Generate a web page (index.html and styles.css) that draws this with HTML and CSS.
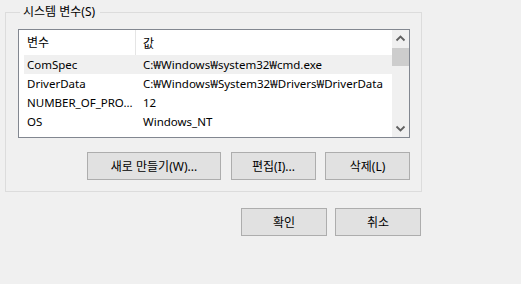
FILE: index.html
```html
<!DOCTYPE html>
<html lang="ko">
<head>
    <meta charset="UTF-8">
    <title>시스템 변수</title>
    <link rel="stylesheet" href="styles.css">
</head>
<body>

    <div class="group">
        <div class="group-title">시스템 변수(S)</div>

        <!-- Variable list -->
        <div class="list">
            <div class="list-body">
                <div class="list-header">
                    <div class="head-cell name">변수</div>
                    <div class="head-cell value">값</div>
                </div>
                <div class="row selected">
                    <div class="cell name">ComSpec</div>
                    <div class="cell value">C:₩Windows₩system32₩cmd.exe</div>
                </div>
                <div class="row">
                    <div class="cell name">DriverData</div>
                    <div class="cell value">C:₩Windows₩System32₩Drivers₩DriverData</div>
                </div>
                <div class="row">
                    <div class="cell name">NUMBER_OF_PRO...</div>
                    <div class="cell value">12</div>
                </div>
                <div class="row">
                    <div class="cell name">OS</div>
                    <div class="cell value">Windows_NT</div>
                </div>
            </div>
            <div class="scrollbar">
                <svg class="arrow" width="17" height="17" viewBox="0 0 17 17">
                    <path d="M4.5 10.5 L8.5 6.5 L12.5 10.5" fill="none" stroke="#606060" stroke-width="1.8"/>
                </svg>
                <div class="track">
                    <div class="thumb"></div>
                </div>
                <svg class="arrow" width="17" height="17" viewBox="0 0 17 17">
                    <path d="M4.5 6.5 L8.5 10.5 L12.5 6.5" fill="none" stroke="#606060" stroke-width="1.8"/>
                </svg>
            </div>
        </div>

        <div class="buttons">
            <button class="btn wide">새로 만들기(W)...</button>
            <button class="btn">편집(I)...</button>
            <button class="btn">삭제(L)</button>
        </div>
    </div>

    <div class="dialog-buttons">
        <button class="btn">확인</button>
        <button class="btn">취소</button>
    </div>

</body>
</html>
```

FILE: styles.css
```css
* {
    margin: 0;
    padding: 0;
    box-sizing: border-box;
}

body {
    font-family: 'Segoe UI', 'Noto Sans', 'Noto Sans CJK KR', sans-serif;
    font-size: 11.5px;
    color: #000;
    background-color: #f0f0f0;
    width: 521px;
    height: 284px;
    overflow: hidden;
}

.group {
    margin: 12px 0 0 5px;
    width: 417px;
    border: 1px solid #dcdcdc;
    padding: 0 11px 11px 12px;
}

.group-title {
    width: fit-content;
    margin: -9px 0 0 2px;
    padding: 0 5px 0 3px;
    font-size: 12px;
    line-height: 16px;
    background-color: #f0f0f0;
}

.list {
    display: flex;
    margin-top: 9px;
    width: 392px;
    height: 109px;
    border: 1px solid #828790;
    background-color: white;
}

.list-body {
    flex: 1;
    overflow: hidden;
}

.list-header {
    display: flex;
    height: 25px;
    align-items: center;
    font-size: 12px;
}

.head-cell.name {
    width: 117px;
    padding-left: 8px;
    height: 100%;
    line-height: 25px;
    border-right: 1px solid #e5e5e5;
}

.head-cell.value {
    padding-left: 7px;
}

.row {
    display: flex;
    height: 19px;
    line-height: 19px;
    margin-left: 5px;
    white-space: nowrap;
}

.row.selected {
    background-color: #f0f0f0;
}

.cell {
    padding-left: 3px;
}

.cell.name {
    width: 116px;
}

.scrollbar {
    width: 17px;
    display: flex;
    flex-direction: column;
    background-color: #f0f0f0;
}

.arrow {
    display: block;
}

.track {
    flex: 1;
    padding-top: 1px;
}

.thumb {
    height: 18px;
    background-color: #cdcdcd;
}

.buttons {
    display: flex;
    justify-content: flex-end;
    gap: 9px;
    margin-top: 14px;
}

.btn {
    font-family: inherit;
    font-size: 12px;
    color: #000;
    width: 85px;
    height: 28px;
    background-color: #e1e1e1;
    border: 1px solid #adadad;
}

.btn.wide {
    width: 134px;
    margin-right: 1px;
}

.dialog-buttons {
    display: flex;
    gap: 8px;
    width: 421px;
    justify-content: flex-end;
    margin-top: 16px;
}

.dialog-buttons .btn {
    width: 86px;
}
```
